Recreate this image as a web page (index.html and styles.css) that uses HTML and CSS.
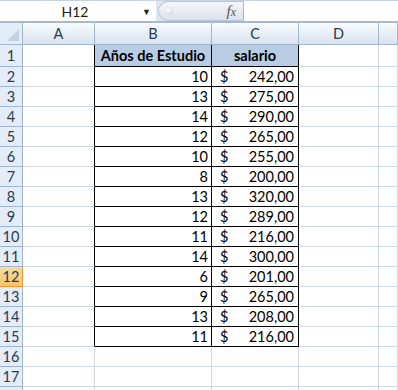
FILE: index.html
```html
<!DOCTYPE html>
<html lang="es">
<head>
  <meta charset="UTF-8" />
  <title>Libro1 - Excel</title>
  <link rel="stylesheet" href="styles.css">
</head>
<body>
  <div class="formula-bar">
    <div class="name-box">
      <span class="cell-ref">H12</span>
      <span class="arrow">&#9660;</span>
    </div>
    <div class="grip"><span class="knob"></span><span class="fx">f<i>x</i></span></div>
    <div class="formula-input"></div>
  </div>

  <div class="sheet" id="sheet"></div>

  <script>
    const data = [
      [10, "242,00"], [13, "275,00"], [14, "290,00"], [12, "265,00"],
      [10, "255,00"], [8, "200,00"], [13, "320,00"], [12, "289,00"],
      [11, "216,00"], [14, "300,00"], [6, "201,00"], [9, "265,00"],
      [13, "208,00"], [11, "216,00"]
    ];
    const sheet = document.getElementById("sheet");

    function cell(cls, html) {
      const d = document.createElement("div");
      d.className = cls;
      d.innerHTML = html || "";
      sheet.appendChild(d);
    }

    // column headers
    cell("corner", '<span class="tri"></span>');
    ["A", "B", "C", "D", ""].forEach(l => cell("col-head", l));

    for (let r = 1; r <= 18; r++) {
      const rowCls = r === 1 ? " first" : "";
      // row 18 only peeks in at the bottom edge, its number is hidden
      cell("row-head" + rowCls + (r === 12 ? " active" : ""), r < 18 ? r : "");
      if (r === 1) {
        cell("cell edge" + rowCls);
        cell("cell tbl title" + rowCls, "Años de Estudio");
        cell("cell tbl title" + rowCls, "salario");
      } else if (r <= 15) {
        const row = data[r - 2];
        cell("cell edge");
        cell("cell tbl num", row[0]);
        cell("cell tbl money", '<span>$</span><span>' + row[1] + '</span>');
      } else {
        cell("cell");
        cell("cell");
        cell("cell");
      }
      cell("cell" + rowCls);
      cell("cell" + rowCls);
    }
  </script>
</body>
</html>
```

FILE: styles.css
```css
body {
  margin: 0;
  width: 398px;
  height: 390px;
  overflow: hidden;
  background: #fff;
  font-family: Lato, "Liberation Sans", sans-serif;
}

.formula-bar {
  display: flex;
  height: 23px;
  box-sizing: border-box;
  background: #dfe6f0;
  border-top: 1px solid #c5d2e2;
  border-bottom: 2px solid #a7b8cf;
}

.name-box {
  width: 156px;
  display: flex;
  align-items: center;
  background: #fff;
  font-size: 14px;
  color: #1b1b1b;
}

.cell-ref {
  flex: 1;
  text-align: center;
  padding-left: 8px;
}

.arrow {
  font-size: 9px;
  width: 14px;
  color: #222;
}

.grip {
  width: 86px;
  display: flex;
  align-items: center;
  justify-content: space-between;
  background: linear-gradient(#f4f6f9, #dbe2ec);
  border-radius: 11px 0 0 11px;
  border: 1px solid #b9c6d7;
  border-right: 1px solid #a9b6c7;
  box-sizing: border-box;
  margin-left: 2px;
}

.knob {
  width: 8px;
  height: 8px;
  margin-left: 6px;
  border-radius: 50%;
  background: radial-gradient(circle at 40% 40%, #fff, #c4ccd6);
}

.fx {
  font-family: "Liberation Serif", serif;
  font-style: italic;
  font-size: 15px;
  color: #555;
  padding-right: 7px;
}

.fx i {
  font-size: 12px;
}

.formula-input {
  flex: 1;
  background: #fff;
}

.sheet {
  display: grid;
  grid-template-columns: 23px 72px 117px 87px 80px 19px;
  grid-template-rows: 22px 22px repeat(17, 20px);
  font-size: 14.5px;
}

.sheet > div {
  box-sizing: border-box;
  border-right: 1px solid #d0d7e5;
  border-bottom: 1px solid #d0d7e5;
  display: flex;
  align-items: center;
  white-space: nowrap;
  overflow: hidden;
}

.sheet > .corner {
  position: relative;
  background: #e4ecf7;
  border-color: #9eb6ce;
}

.tri {
  position: absolute;
  right: 3px;
  bottom: 3px;
  width: 0;
  height: 0;
  border-left: 12px solid transparent;
  border-bottom: 12px solid #c3d1e2;
}

.sheet > .col-head {
  justify-content: center;
  background: linear-gradient(#f9fcfd, #e4ebf4 60%, #d9e2ee);
  border-right-color: #9eb6ce;
  border-bottom-color: #9eb6ce;
  color: #2a3a52;
}

.sheet > .row-head {
  justify-content: center;
  background: #e4ecf7;
  border-right-color: #9eb6ce;
  border-bottom-color: #9eb6ce;
  color: #2a3a52;
}

.sheet > .row-head.active {
  background: linear-gradient(#f9dba1, #f3c768);
  border-bottom-color: #f29536;
  border-right-color: #f29536;
}

.sheet > .edge {
  border-right-color: #000;
}

.sheet > .tbl {
  border-right-color: #000;
  border-bottom-color: #000;
  padding: 0 3px;
}

.sheet > .title {
  justify-content: center;
  font-weight: bold;
  background: #b8cce4;
}

.sheet > .num {
  justify-content: flex-end;
}

.sheet > .money {
  justify-content: space-between;
  padding: 0 4px 0 8px;
}
```
